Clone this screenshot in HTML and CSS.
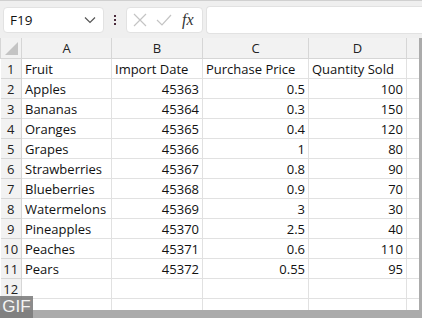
FILE: index.html
```html
<!DOCTYPE html>
<html lang="en">
<head>
    <meta charset="UTF-8">
    <title>Fruit sheet</title>
    <link rel="stylesheet" href="styles.css">
</head>
<body>
    <div class="window">
        <div class="toolbar">
            <div class="name-box">
                <span>F19</span>
                <svg class="chevron" width="12" height="8" viewBox="0 0 12 8"><path d="M1 1.5 L6 6.5 L11 1.5" fill="none" stroke="#555" stroke-width="1.2"/></svg>
            </div>
            <div class="dots"><i></i><i></i><i></i></div>
            <div class="fx-box">
                <svg width="14" height="14" viewBox="0 0 14 14"><path d="M1 1 L13 13 M13 1 L1 13" stroke="#c4c4c4" stroke-width="1.2"/></svg>
                <svg width="16" height="14" viewBox="0 0 16 14"><path d="M1 7 L6 12 L15 2" fill="none" stroke="#c4c4c4" stroke-width="1.2"/></svg>
                <span class="fx">fx</span>
            </div>
            <div class="formula-input"></div>
        </div>

        <table class="sheet">
            <colgroup>
                <col style="width:21px"><col style="width:90px"><col style="width:91px">
                <col style="width:106px"><col style="width:98px"><col style="width:12px">
            </colgroup>
            <thead>
                <tr>
                    <th class="corner"><span class="tri"></span></th>
                    <th>A</th><th>B</th><th>C</th><th>D</th><th></th>
                </tr>
            </thead>
            <tbody>
                <tr><th>1</th><td>Fruit</td><td>Import Date</td><td>Purchase Price</td><td>Quantity Sold</td><td></td></tr>
                <tr><th>2</th><td>Apples</td><td class="num">45363</td><td class="num">0.5</td><td class="num">100</td><td></td></tr>
                <tr><th>3</th><td>Bananas</td><td class="num">45364</td><td class="num">0.3</td><td class="num">150</td><td></td></tr>
                <tr><th>4</th><td>Oranges</td><td class="num">45365</td><td class="num">0.4</td><td class="num">120</td><td></td></tr>
                <tr><th>5</th><td>Grapes</td><td class="num">45366</td><td class="num">1</td><td class="num">80</td><td></td></tr>
                <tr><th>6</th><td>Strawberries</td><td class="num">45367</td><td class="num">0.8</td><td class="num">90</td><td></td></tr>
                <tr><th>7</th><td>Blueberries</td><td class="num">45368</td><td class="num">0.9</td><td class="num">70</td><td></td></tr>
                <tr><th>8</th><td>Watermelons</td><td class="num">45369</td><td class="num">3</td><td class="num">30</td><td></td></tr>
                <tr><th>9</th><td>Pineapples</td><td class="num">45370</td><td class="num">2.5</td><td class="num">40</td><td></td></tr>
                <tr><th>10</th><td>Peaches</td><td class="num">45371</td><td class="num">0.6</td><td class="num">110</td><td></td></tr>
                <tr><th>11</th><td>Pears</td><td class="num">45372</td><td class="num">0.55</td><td class="num">95</td><td></td></tr>
                <tr><th>12</th><td></td><td></td><td></td><td></td><td></td></tr>
                <tr class="cut"><th></th><td></td><td></td><td></td><td></td><td></td></tr>
            </tbody>
        </table>

        <div class="gif">GIF</div>
    </div>
</body>
</html>
```

FILE: styles.css
```css
body {
    margin: 0;
    font-family: "Open Sans", "Noto Sans", sans-serif;
    background: #ababab;
}
.window {
    position: relative;
    width: 422px;
    height: 318px;
    background: #ababab;
    overflow: hidden;
}
.toolbar {
    display: flex;
    align-items: center;
    height: 38px;
    background: #efefef;
    border-top: 1px solid #d0d0d0;
    box-sizing: border-box;
    padding-left: 3px;
}
.name-box {
    display: flex;
    align-items: center;
    justify-content: space-between;
    width: 101px;
    height: 26px;
    box-sizing: border-box;
    background: #fff;
    border: 1px solid #e2e2e2;
    border-radius: 4px;
    padding: 0 7px 0 6px;
    font-size: 13.5px;
    color: #111;
}
.chevron {
    margin-top: 1px;
}
.dots {
    display: flex;
    flex-direction: column;
    gap: 2px;
    margin: 0 10px 0 10px;
}
.dots i {
    display: block;
    width: 2px;
    height: 2px;
    background: #4a2b3c;
}
.fx-box {
    display: flex;
    align-items: center;
    gap: 9px;
    width: 77px;
    height: 26px;
    box-sizing: border-box;
    background: #fff;
    border: 1px solid #e2e2e2;
    border-radius: 4px;
    padding: 0 5px 0 6px;
}
.fx {
    font-family: "Liberation Serif", serif;
    font-style: italic;
    font-size: 16px;
    color: #333;
    margin-left: 1px;
}
.formula-input {
    flex: 1;
    height: 26px;
    margin-left: 3px;
    background: #fff;
    border: 1px solid #e2e2e2;
    border-radius: 4px 0 0 4px;
    border-right: none;
}
.sheet {
    border-collapse: collapse;
    table-layout: fixed;
    width: 418px;
    background: #fff;
    font-size: 13px;
    color: #111;
}
.sheet th {
    height: 19px;
    line-height: 18px;
    padding: 0;
    background: #f2f2f2;
    font-weight: normal;
    color: #222;
    border: 1px solid #d6d6d6;
    text-align: center;
}
.sheet thead th {
    height: 20px;
    border-top: none;
}
.sheet tbody th {
    border-left: none;
}
.sheet td {
    height: 19px;
    padding: 0 3px;
    border: 1px solid #e1e1e1;
    white-space: nowrap;
    overflow: hidden;
    line-height: 18px;
}
.sheet td:last-child,
.sheet th:last-child {
    border-right: none;
}
.sheet .num {
    text-align: right;
}
.sheet .cut th,
.sheet .cut td {
    height: 11px;
    line-height: 11px;
    border-bottom: none;
}
.corner {
    position: relative;
}
.tri {
    position: absolute;
    right: 3px;
    bottom: 3px;
    width: 0;
    height: 0;
    border-left: 13px solid transparent;
    border-bottom: 13px solid #c4c4c4;
}
.gif {
    position: absolute;
    left: 0;
    top: 296px;
    width: 33px;
    height: 22px;
    background: rgba(120, 120, 120, 0.85);
    color: #f4f4f4;
    font-family: "Liberation Sans", sans-serif;
    font-size: 17px;
    line-height: 22px;
    text-align: center;
}
```
